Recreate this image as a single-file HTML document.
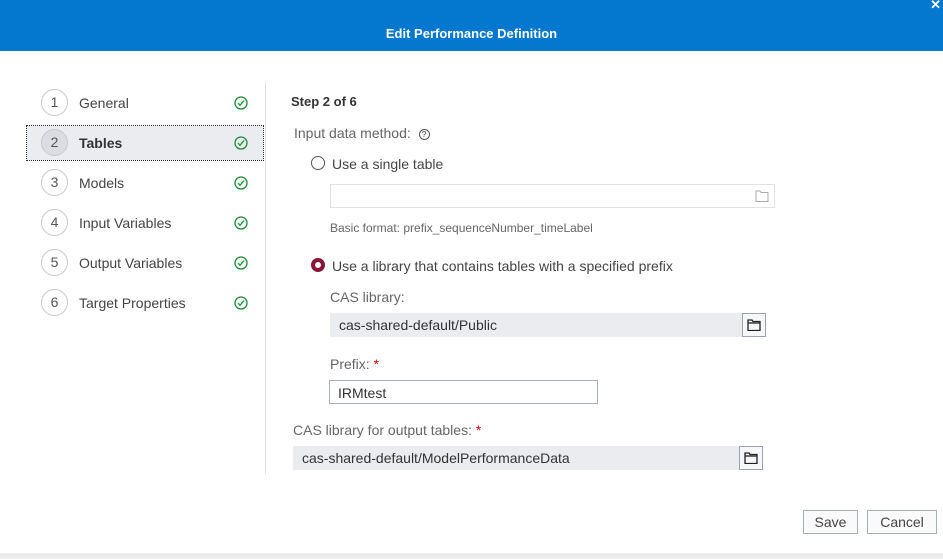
<!DOCTYPE html>
<html><head><style>
body{margin:0;width:943px;height:559px;background:#fff;font-family:"Liberation Sans",sans-serif;position:relative;overflow:hidden;color:#333}
.hdr{position:absolute;left:0;top:0;width:943px;height:51px;background:#0478cf;color:#fff}
.hdr .t{position:absolute;left:0;right:0;top:26px;text-align:center;font-weight:bold;font-size:13px}
.x{position:absolute;right:2px;top:-3px;font-size:13px;font-weight:bold}
.a{position:absolute}
.step{position:absolute;left:26px;width:238px;height:36px;font-size:14px;color:#444}
.step .c{position:absolute;left:15px;top:4px;width:27px;height:27px;border:1px solid #c6c9d0;border-radius:50%;box-sizing:border-box;text-align:center;line-height:25px;font-size:14px;color:#555;background:#fff}
.step .l{position:absolute;left:53px;top:10px}
.step svg{position:absolute;left:208px;top:11px}
.sel{background:#ebecf0;border:1px dotted #333;box-sizing:border-box}
.sel .c{background:#dcdde2;left:14px;top:3px}
.sel .l{font-weight:bold;color:#333;left:52px;top:9px}
.sel svg{left:207px;top:10px}
.inp{position:absolute;box-sizing:border-box;font-size:14px;color:#333}
.fb{position:absolute;width:24px;height:24px;border:1px solid #9aa3b5;box-sizing:border-box;background:#f6f7f9}
.lbl{position:absolute;font-size:14px;color:#666}
.btn{position:absolute;top:510px;height:24px;border:1px solid #a6afc0;box-sizing:border-box;font-size:14px;color:#444;text-align:center;line-height:22px;background:#fafafa}
</style></head><body>
<div class="hdr"><div class="t">Edit Performance Definition</div><div class="x">✕</div></div>
<div class="a" style="left:265px;top:82px;width:1px;height:392px;background:#dfe1e6"></div>

<div class="step" style="top:85px"><div class="c">1</div><div class="l">General</div><svg width="14" height="14"><circle cx="7" cy="7" r="6" fill="none" stroke="#1a8c34" stroke-width="1.3"/><path d="M4 7l2 2.3L10 4.5" fill="none" stroke="#1a8c34" stroke-width="1.3"/></svg></div>
<div class="step sel" style="top:125px"><div class="c">2</div><div class="l">Tables</div><svg width="14" height="14"><circle cx="7" cy="7" r="6" fill="none" stroke="#1a8c34" stroke-width="1.3"/><path d="M4 7l2 2.3L10 4.5" fill="none" stroke="#1a8c34" stroke-width="1.3"/></svg></div>
<div class="step" style="top:165px"><div class="c">3</div><div class="l">Models</div><svg width="14" height="14"><circle cx="7" cy="7" r="6" fill="none" stroke="#1a8c34" stroke-width="1.3"/><path d="M4 7l2 2.3L10 4.5" fill="none" stroke="#1a8c34" stroke-width="1.3"/></svg></div>
<div class="step" style="top:205px"><div class="c">4</div><div class="l">Input Variables</div><svg width="14" height="14"><circle cx="7" cy="7" r="6" fill="none" stroke="#1a8c34" stroke-width="1.3"/><path d="M4 7l2 2.3L10 4.5" fill="none" stroke="#1a8c34" stroke-width="1.3"/></svg></div>
<div class="step" style="top:245px"><div class="c">5</div><div class="l">Output Variables</div><svg width="14" height="14"><circle cx="7" cy="7" r="6" fill="none" stroke="#1a8c34" stroke-width="1.3"/><path d="M4 7l2 2.3L10 4.5" fill="none" stroke="#1a8c34" stroke-width="1.3"/></svg></div>
<div class="step" style="top:285px"><div class="c">6</div><div class="l">Target Properties</div><svg width="14" height="14"><circle cx="7" cy="7" r="6" fill="none" stroke="#1a8c34" stroke-width="1.3"/><path d="M4 7l2 2.3L10 4.5" fill="none" stroke="#1a8c34" stroke-width="1.3"/></svg></div>

<div class="a" style="left:291px;top:94px;font-size:13px;font-weight:bold;color:#333">Step 2 of 6</div>
<div class="lbl" style="left:294px;top:125px">Input data method: <span style="display:inline-block;width:9px;height:9px;border:1px solid #555;border-radius:50%;font-size:8px;line-height:9px;text-align:center;color:#333;vertical-align:1px;margin-left:4px">?</span></div>

<div class="a" style="left:311px;top:156px;width:14px;height:14px;border:1px solid #555;border-radius:50%;box-sizing:border-box"></div>
<div class="a" style="left:332px;top:156px;font-size:14px;color:#444">Use a single table</div>
<div class="inp" style="left:330px;top:184px;width:445px;height:24px;border:1px solid #dfe1e6"></div>
<svg class="a" style="left:755px;top:190px" width="14" height="12"><path d="M1 1h4l1 1.5h7v9H1z" fill="none" stroke="#aaa"/></svg>
<div class="a" style="left:330px;top:221px;font-size:12px;color:#666">Basic format: prefix_sequenceNumber_timeLabel</div>

<div class="a" style="left:311px;top:258px;width:14px;height:14px;border:4px solid #8a1538;border-radius:50%;box-sizing:border-box"></div>
<div class="a" style="left:332px;top:258px;font-size:14px;color:#444">Use a library that contains tables with a specified prefix</div>
<div class="lbl" style="left:330px;top:289px">CAS library:</div>
<div class="inp" style="left:330px;top:313px;width:412px;height:24px;background:#ebecf0;padding:4px 9px">cas-shared-default/Public</div>
<div class="fb" style="left:742px;top:313px"></div>
<svg class="a" style="left:747px;top:319px" width="14" height="12"><path d="M1 1h4l1 1.5h7v9H1z" fill="none" stroke="#222" stroke-width="1.3"/><path d="M1 4h12" stroke="#222" stroke-width="1.3"/></svg>
<div class="lbl" style="left:330px;top:356px">Prefix: <span style="color:#d00">*</span></div>
<div class="inp" style="left:329px;top:380px;width:269px;height:24px;border:1px solid #a6afc0;padding:4px 8px">IRMtest</div>

<div class="lbl" style="left:293px;top:422px">CAS library for output tables: <span style="color:#d00">*</span></div>
<div class="inp" style="left:293px;top:446px;width:446px;height:24px;background:#ebecf0;padding:4px 9px">cas-shared-default/ModelPerformanceData</div>
<div class="fb" style="left:739px;top:446px"></div>
<svg class="a" style="left:744px;top:452px" width="14" height="12"><path d="M1 1h4l1 1.5h7v9H1z" fill="none" stroke="#222" stroke-width="1.3"/><path d="M1 4h12" stroke="#222" stroke-width="1.3"/></svg>

<div class="btn" style="left:803px;width:55px">Save</div>
<div class="btn" style="left:867px;width:70px">Cancel</div>
<div class="a" style="left:0;top:553px;width:943px;height:6px;background:#ececec"></div>
</body></html>
